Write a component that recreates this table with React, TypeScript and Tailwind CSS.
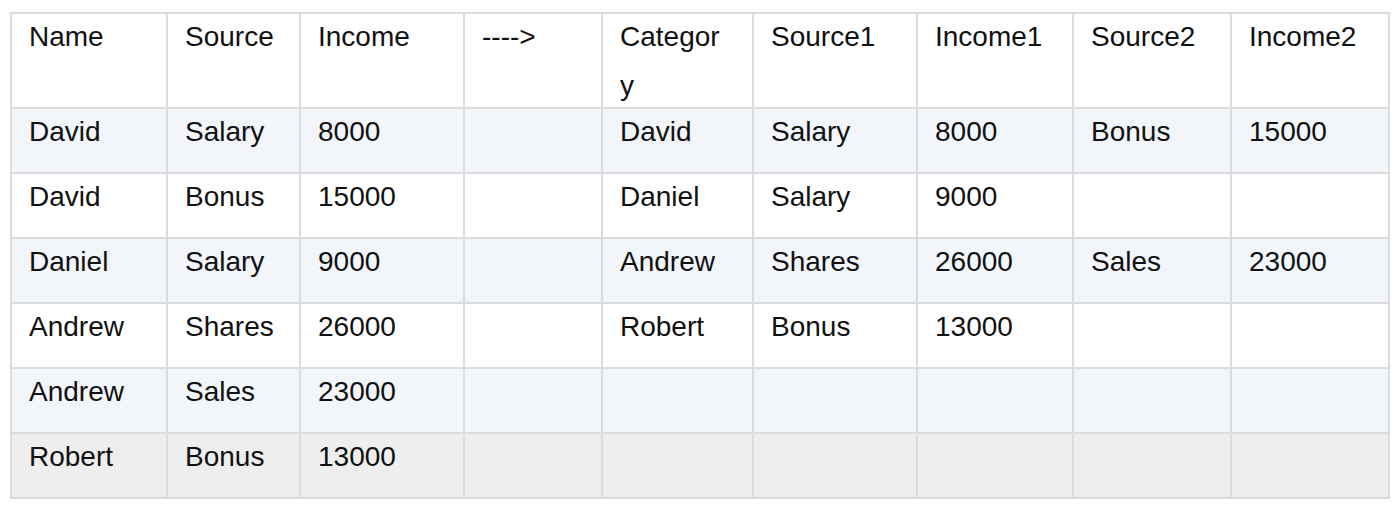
const header = ["Name", "Source", "Income", "---->", "Category", "Source1", "Income1", "Source2", "Income2"];

const rows: string[][] = [
  ["David", "Salary", "8000", "", "David", "Salary", "8000", "Bonus", "15000"],
  ["David", "Bonus", "15000", "", "Daniel", "Salary", "9000", "", ""],
  ["Daniel", "Salary", "9000", "", "Andrew", "Shares", "26000", "Sales", "23000"],
  ["Andrew", "Shares", "26000", "", "Robert", "Bonus", "13000", "", ""],
  ["Andrew", "Sales", "23000", "", "", "", "", "", ""],
  ["Robert", "Bonus", "13000", "", "", "", "", "", ""],
];

// row backgrounds: alternating light blue / white, last row gray
const rowBg = ["bg-[#f2f5fa]", "bg-white", "bg-[#f2f5fa]", "bg-white", "bg-[#f2f5fa]", "bg-[#eeeeee]"];

export default function App() {
  return (
    <div className="min-h-screen bg-white pt-[12px] pl-[10px]" style={{ fontFamily: '"Liberation Sans", Arial, sans-serif' }}>
      <div className="grid w-fit gap-[2px] bg-[#dcdcdc] p-[2px] grid-cols-[154px_131px_162px_136px_149px_162px_154px_156px_156px] grid-rows-[93px_repeat(6,63px)] text-[28px] leading-[45px] text-[#111]">
        {header.map((h) => (
          <div key={h} className="bg-white pl-[17px] pr-[22px] break-all">
            <div className="-mt-[2px] leading-[49px]">{h}</div>
          </div>
        ))}
        {rows.map((row, i) =>
          row.map((cell, j) => (
            <div key={`${i}-${j}`} className={`${rowBg[i]} pl-[17px] pr-[22px] break-all`}>
              {cell}
            </div>
          ))
        )}
      </div>
    </div>
  );
}
